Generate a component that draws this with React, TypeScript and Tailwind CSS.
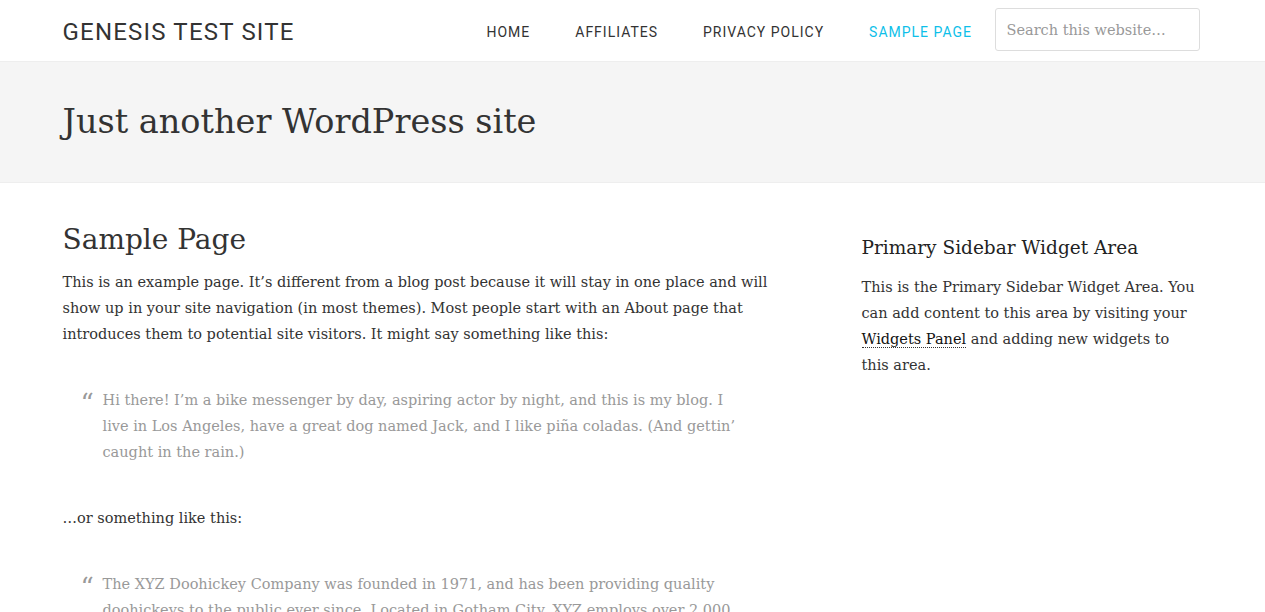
const serif = "font-['DejaVu_Serif',serif]";

export default function App() {
  const nav = [
    { label: "Home", active: false },
    { label: "Affiliates", active: false },
    { label: "Privacy Policy", active: false },
    { label: "Sample Page", active: true },
  ];

  return (
    <div className="min-h-screen bg-white text-[#333]">
      <header className="h-[62px] border-b border-[#eee] bg-white">
        <div className="max-w-[1140px] mx-auto h-full flex items-center justify-between">
          <a href="#" className="font-['Roboto',sans-serif] text-[24px] tracking-[1.2px] uppercase text-[#333] pt-[2px]">
            Genesis Test Site
          </a>
          <div className="flex items-center mr-[3px]">
            <nav className="flex items-center pt-[3px]">
              {nav.map((n) => (
                <a
                  key={n.label}
                  href="#"
                  className={
                    "font-['Roboto',sans-serif] text-[14px] tracking-[1px] uppercase px-[22.5px] " +
                    (n.active ? "text-[#0ebfe9]" : "text-[#333]")
                  }
                >
                  {n.label}
                </a>
              ))}
            </nav>
            <input
              type="search"
              placeholder="Search this website…"
              className={`${serif} w-[205px] h-[43px] mb-[2px] border border-[#ddd] rounded-[3px] px-[11px] text-[14.5px] placeholder:text-[#999] outline-none`}
            />
          </div>
        </div>
      </header>

      <div className="bg-[#f5f5f5] border-b border-[#eee] py-10">
        <div className="max-w-[1140px] mx-auto">
          <p className={`${serif} text-[33.5px] leading-[40px] text-[#333]`}>
            Just another WordPress site
          </p>
        </div>
      </div>

      <div className={`${serif} max-w-[1140px] mx-auto flex justify-between text-[14.5px] leading-[26px]`}>
        <main className="w-[730px] pt-10">
          <h1 className="text-[28px] leading-[34px] mb-3">Sample Page</h1>
          <p className="mb-[26px]">
            This is an example page. It’s different from a blog post because it will stay in one place and will
            show up in your site navigation (in most themes). Most people start with an About page that
            introduces them to potential site visitors. It might say something like this:
          </p>
          <blockquote className="relative m-10 text-[#999]">
            <span className="absolute left-[-22px] top-[3px] text-[26px] leading-none">“</span>
            Hi there! I’m a bike messenger by day, aspiring actor by night, and this is my blog. I live in Los
            Angeles, have a great dog named Jack, and I like piña coladas. (And gettin’ caught in the rain.)
          </blockquote>
          <p className="mb-[26px]">…or something like this:</p>
          <blockquote className="relative m-10 text-[#999]">
            <span className="absolute left-[-22px] top-[3px] text-[26px] leading-none">“</span>
            The XYZ Doohickey Company was founded in 1971, and has been providing quality doohickeys to the public
            ever since. Located in Gotham City, XYZ employs over 2,000 people and does all kinds of awesome things
            for the Gotham community.
          </blockquote>
        </main>

        <aside className="w-[341px] pt-[54px]">
          <h3 className="text-[18.5px] leading-[22px] mb-[15px] text-[#222]">Primary Sidebar Widget Area</h3>
          <p className="max-w-[336px]">
            This is the Primary Sidebar Widget Area. You can add content to this area by visiting your{" "}
            <a href="#" className="border-b border-dotted border-[#333] text-[#111]">
              Widgets Panel
            </a>{" "}
            and adding new widgets to this area.
          </p>
        </aside>
      </div>
    </div>
  );
}
